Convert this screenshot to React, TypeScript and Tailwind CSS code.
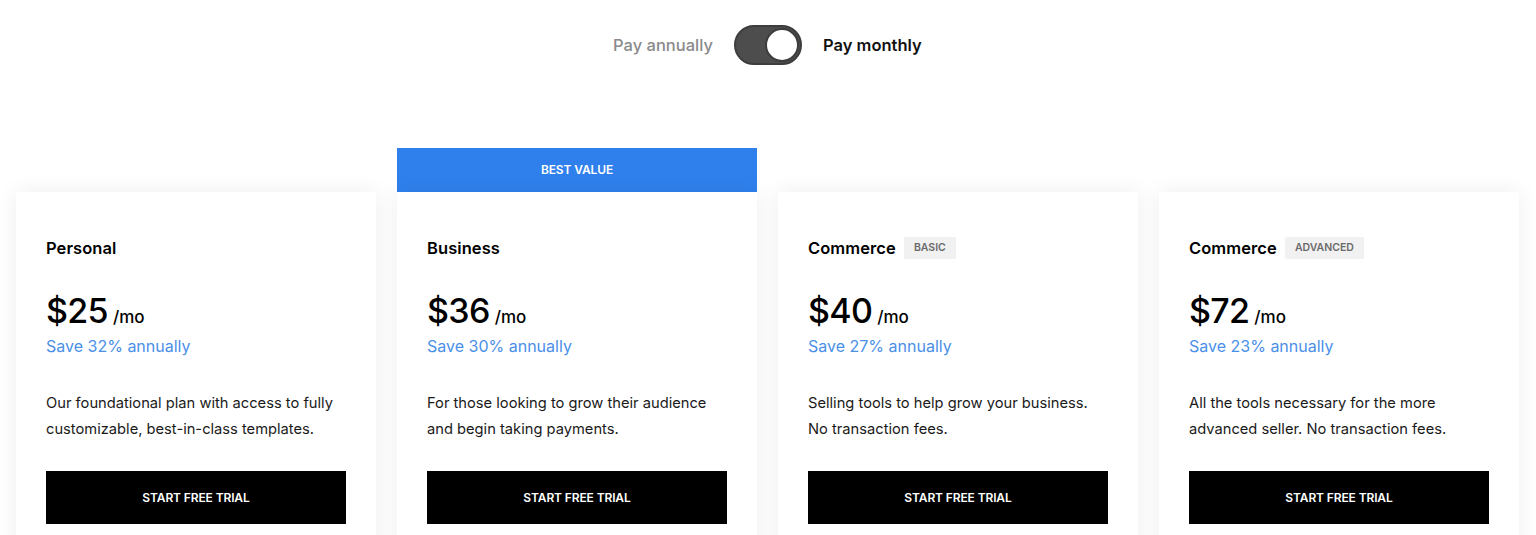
import React from "react";

const plans = [
  { name: "Personal", badge: "", price: "$25", save: "Save 32% annually", desc: ["Our foundational plan with access to fully", "customizable, best-in-class templates."], best: false },
  { name: "Business", badge: "", price: "$36", save: "Save 30% annually", desc: ["For those looking to grow their audience", "and begin taking payments."], best: true },
  { name: "Commerce", badge: "BASIC", price: "$40", save: "Save 27% annually", desc: ["Selling tools to help grow your business.", "No transaction fees."], best: false },
  { name: "Commerce", badge: "ADVANCED", price: "$72", save: "Save 23% annually", desc: ["All the tools necessary for the more", "advanced seller. No transaction fees."], best: false },
];

export default function App() {
  return (
    <div className="w-[1536px] h-[535px] overflow-hidden bg-white text-black" style={{ fontFamily: "Inter, 'Noto Sans', sans-serif" }}>
      <div className="flex items-center justify-center pt-[25px] h-[40px] box-content">
        <span className="text-[16.5px] font-medium text-[#8a8a8a] w-[100px] whitespace-nowrap text-right">Pay annually</span>
        <div className="mx-[21px] w-[68px] h-[40px] rounded-full bg-[#4d4d4d] border-2 border-[#3d3d3d] flex items-center justify-end pr-[1px]">
          <div className="w-[34px] h-[34px] rounded-full bg-white border-2 border-[#3d3d3d]" />
        </div>
        <span className="text-[16.5px] font-semibold text-[#111] w-[100px] whitespace-nowrap">Pay monthly</span>
      </div>
      <div className="mt-[83px] grid grid-cols-4 gap-[21px] px-[16px] pr-[17px]">
        {plans.map((p, i) => (
          <div key={i} className="flex flex-col">
            {p.best ? (
              <div className="h-[44px] bg-[#2f80ed] flex items-center justify-center text-white text-[12px] font-semibold tracking-[-0.01em]">BEST VALUE</div>
            ) : (
              <div className="h-[44px]" />
            )}
            <div className="bg-white shadow-[0_0_22px_rgba(0,0,0,0.07)] pt-[44px] px-[30px] pb-[40px]">
              <div className="h-6 flex items-center gap-[8px]">
                <span className="text-[16.5px] font-semibold tracking-[0.005em]">{p.name}</span>
                {p.badge && (
                  <span className="h-[22px] px-[10px] flex items-center bg-[#f1f1f1] text-[#6b6b6b] text-[10.5px] font-semibold rounded-[2px]">{p.badge}</span>
                )}
              </div>
              <div className="mt-[31px] flex items-baseline h-[40px]">
                <span className="text-[34px] leading-[40px] font-medium tracking-[-0.02em]">{p.price}</span>
                <span className="ml-[5px] text-[17px] font-medium">/mo</span>
              </div>
              <div className="mt-[3px] text-[16px] leading-[24px] text-[#4a8fe8]">{p.save}</div>
              <div className="mt-[32px] text-[14.7px] leading-[26px] text-[#1a1a1a]">
                <div>{p.desc[0]}</div>
                <div>{p.desc[1]}</div>
              </div>
              <button className="mt-[29px] w-full h-[53px] bg-black text-white text-[12px] font-semibold tracking-[-0.01em]">START FREE TRIAL</button>
            </div>
          </div>
        ))}
      </div>
    </div>
  );
}
